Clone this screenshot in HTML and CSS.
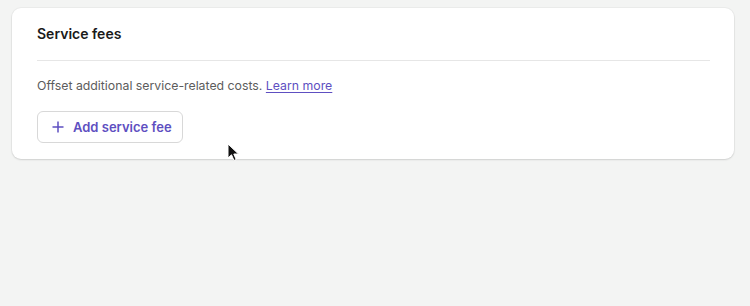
FILE: index.html
```html
<!DOCTYPE html>
<html>
<head>
<meta charset="utf-8">
<link rel="stylesheet" href="styles.css">
</head>
<body>
<div class="page">
  <section class="card">
    <h2 class="card-title">Service fees</h2>
    <div class="divider"></div>
    <p class="desc">Offset additional service-related costs. <a href="#" class="link">Learn more</a></p>
    <button class="btn">
      <svg class="plus" width="12" height="12" viewBox="0 0 12 12"><path d="M6 0.5V11.5M0.5 6H11.5" stroke="currentColor" stroke-width="1.5" fill="none"/></svg>
      <span>Add service fee</span>
    </button>
  </section>
</div>
<svg class="cursor" width="14" height="20" viewBox="0 0 14 20"><path d="M1 1 L1 15 L4.5 11.8 L7 17.5 L9.2 16.5 L6.8 11 L11.5 11 Z" fill="#111" stroke="#fff" stroke-width="1"/></svg>
</body>
</html>
```
FILE: styles.css
```css
* { box-sizing: border-box; }
html, body { margin: 0; padding: 0; }
body {
  background: #f3f4f3;
  font-family: Inter, "Noto Sans", sans-serif;
  width: 750px;
  height: 306px;
  position: relative;
  overflow: hidden;
}
.page { padding: 8px 16px 0 12px; }
.card {
  background: #fff;
  border-radius: 9px;
  box-shadow: 0 1px 2px rgba(0,0,0,0.12), 0 0 0 1px rgba(0,0,0,0.03);
  padding: 16px 24px 16px 25px;
  height: 151px;
}
.card-title {
  margin: 0;
  font-size: 14px;
  font-weight: 600;
  color: #1a1a1a;
  line-height: 20px;
}
.divider {
  height: 1px;
  background: #e6e6e6;
  margin-top: 16px;
}
.desc {
  margin: 16px 0 0;
  font-size: 12.3px;
  color: #5c5c5c;
  line-height: 18px;
}
.link { color: #5e4fc1; text-decoration: underline; text-underline-offset: 2px; }
.btn {
  margin-top: 16px;
  height: 32px;
  display: inline-flex;
  align-items: center;
  gap: 9px;
  padding: 0 10px 0 14px;
  border: 1px solid #d8d8d8;
  border-radius: 6px;
  background: #fff;
  color: #5e4fc1;
  font-family: inherit;
  font-size: 13px;
  font-weight: 600;
}
.plus { display: block; }
.cursor { position: absolute; left: 227px; top: 143px; }
```
